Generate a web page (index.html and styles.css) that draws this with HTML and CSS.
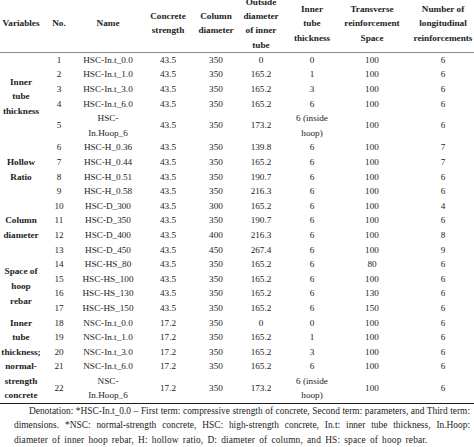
FILE: index.html
```html
<!DOCTYPE html>
<html>
<head>
<meta charset="utf-8">
<link rel="stylesheet" href="styles.css">
</head>
<body>
<table class="tbl">
<colgroup>
<col class="c1"><col class="c2"><col class="c3"><col class="c4"><col class="c5"><col class="c6"><col class="c7"><col class="c8"><col class="c9">
</colgroup>
<thead>
<tr>
<th>Variables</th><th>No.</th><th>Name</th><th>Concrete<br>strength</th><th>Column<br>diameter</th><th>Outside<br>diameter<br>of inner<br>tube</th><th>Inner<br>tube<br>thickness</th><th>Transverse<br>reinforcement<br>Space</th><th>Number of<br>longitudinal<br>reinforcements</th>
</tr>
</thead>
<tbody>
<tr><td class="var" rowspan="5">Inner<br>tube<br>thickness</td><td>1</td><td>HSC-In.t_0.0</td><td>43.5</td><td>350</td><td>0</td><td>0</td><td>100</td><td>6</td></tr>
<tr><td>2</td><td>HSC-In.t_1.0</td><td>43.5</td><td>350</td><td>165.2</td><td>1</td><td>100</td><td>6</td></tr>
<tr><td>3</td><td>HSC-In.t_3.0</td><td>43.5</td><td>350</td><td>165.2</td><td>3</td><td>100</td><td>6</td></tr>
<tr><td>4</td><td>HSC-In.t_6.0</td><td>43.5</td><td>350</td><td>165.2</td><td>6</td><td>100</td><td>6</td></tr>
<tr><td>5</td><td>HSC-<br>In.Hoop_6</td><td>43.5</td><td>350</td><td>173.2</td><td>6 (inside<br>hoop)</td><td>100</td><td>6</td></tr>
<tr><td class="var" rowspan="4">Hollow<br>Ratio</td><td>6</td><td>HSC-H_0.36</td><td>43.5</td><td>350</td><td>139.8</td><td>6</td><td>100</td><td>7</td></tr>
<tr><td>7</td><td>HSC-H_0.44</td><td>43.5</td><td>350</td><td>165.2</td><td>6</td><td>100</td><td>7</td></tr>
<tr><td>8</td><td>HSC-H_0.51</td><td>43.5</td><td>350</td><td>190.7</td><td>6</td><td>100</td><td>6</td></tr>
<tr><td>9</td><td>HSC-H_0.58</td><td>43.5</td><td>350</td><td>216.3</td><td>6</td><td>100</td><td>6</td></tr>
<tr><td class="var" rowspan="4">Column<br>diameter</td><td>10</td><td>HSC-D_300</td><td>43.5</td><td>300</td><td>165.2</td><td>6</td><td>100</td><td>4</td></tr>
<tr><td>11</td><td>HSC-D_350</td><td>43.5</td><td>350</td><td>190.7</td><td>6</td><td>100</td><td>6</td></tr>
<tr><td>12</td><td>HSC-D_400</td><td>43.5</td><td>400</td><td>216.3</td><td>6</td><td>100</td><td>8</td></tr>
<tr><td>13</td><td>HSC-D_450</td><td>43.5</td><td>450</td><td>267.4</td><td>6</td><td>100</td><td>9</td></tr>
<tr><td class="var" rowspan="4">Space of<br>hoop<br>rebar</td><td>14</td><td>HSC-HS_80</td><td>43.5</td><td>350</td><td>165.2</td><td>6</td><td>80</td><td>6</td></tr>
<tr><td>15</td><td>HSC-HS_100</td><td>43.5</td><td>350</td><td>165.2</td><td>6</td><td>100</td><td>6</td></tr>
<tr><td>16</td><td>HSC-HS_130</td><td>43.5</td><td>350</td><td>165.2</td><td>6</td><td>130</td><td>6</td></tr>
<tr><td>17</td><td>HSC-HS_150</td><td>43.5</td><td>350</td><td>165.2</td><td>6</td><td>150</td><td>6</td></tr>
<tr><td class="var" rowspan="5">Inner<br>tube<br>thickness;<br>normal-<br>strength<br>concrete</td><td>18</td><td>NSC-In.t_0.0</td><td>17.2</td><td>350</td><td>0</td><td>0</td><td>100</td><td>6</td></tr>
<tr><td>19</td><td>NSC-In.t_1.0</td><td>17.2</td><td>350</td><td>165.2</td><td>1</td><td>100</td><td>6</td></tr>
<tr><td>20</td><td>NSC-In.t_3.0</td><td>17.2</td><td>350</td><td>165.2</td><td>3</td><td>100</td><td>6</td></tr>
<tr><td>21</td><td>NSC-In.t_6.0</td><td>17.2</td><td>350</td><td>165.2</td><td>6</td><td>100</td><td>6</td></tr>
<tr><td>22</td><td>NSC-<br>In.Hoop_6</td><td>17.2</td><td>350</td><td>173.2</td><td>6 (inside<br>hoop)</td><td>100</td><td>6</td></tr>
</tbody>
</table>
<div class="note">
<span class="line first">Denotation: *HSC-In.t_0.0 – First term: compressive strength of concrete, Second term: parameters, and Third term:</span>
<span class="line">dimensions. *NSC: normal-strength concrete, HSC: high-strength concrete, In.t: inner tube thickness, In.Hoop:</span>
<span class="line last">diameter of inner hoop rebar, H: hollow ratio, D: diameter of column, and HS: space of hoop rebar.</span>
</div>
</body>
</html>
```
FILE: styles.css
```css
html, body {
  margin: 0;
  padding: 0;
  overflow: hidden;
  background: #ffffff;
}
body {
  font-family: "Liberation Serif", "Times New Roman", serif;
  font-size: 9.2px;
  color: #1c1c1c;
  width: 474px;
}
.tbl {
  border-collapse: collapse;
  table-layout: fixed;
  width: 480px;
  margin-top: -5px;
  border-bottom: 1.5px solid #1a1a1a;
}
.c1 { width: 42px; }
.c2 { width: 34px; }
.c3 { width: 64px; }
.c4 { width: 56px; }
.c5 { width: 40px; }
.c6 { width: 50px; }
.c7 { width: 52px; }
.c8 { width: 68px; }
.c9 { width: 74px; }
.tbl th,
.tbl td {
  padding: 0;
  text-align: center;
  vertical-align: middle;
  white-space: nowrap;
}
.tbl th {
  font-weight: bold;
  line-height: 14.2px;
  border-bottom: 1.6px solid #8a8a8a;
}
.tbl td {
  line-height: 14.6px;
}
.tbl td.var {
  font-weight: bold;
}
.note {
  padding: 0 4px 0 14px;
  font-size: 9.4px;
  line-height: 14.3px;
}
.line {
  display: block;
  white-space: nowrap;
  text-align: justify;
  text-align-last: justify;
}
.line.first {
  padding-left: 15px;
}
.line.last {
  text-align-last: left;
  word-spacing: 1.6px;
  letter-spacing: 0.15px;
}
```
